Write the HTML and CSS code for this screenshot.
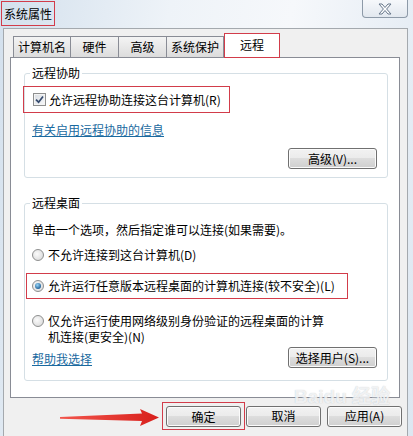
FILE: index.html
```html
<!DOCTYPE html>
<html lang="zh-CN">
<head>
  <meta charset="UTF-8">
  <title>系统属性</title>
  <link rel="stylesheet" href="styles.css">
</head>
<body>
<div class="titlebar">
  <span class="title">系统属性</span>
  <div class="close">
    <svg width="16" height="12" viewBox="0 0 16 12">
      <path d="M2 1 L5 1 L8 4.5 L11 1 L14 1 L9.6 6 L14 11 L11 11 L8 7.5 L5 11 L2 11 L6.4 6 Z" fill="#fff" stroke="#66768a" stroke-width="1" stroke-linejoin="round"/>
    </svg>
  </div>
</div>

<div class="frame">
  <div class="tabs">
    <div class="tab">计算机名</div>
    <div class="tab">硬件</div>
    <div class="tab">高级</div>
    <div class="tab">系统保护</div>
    <div class="tab active">远程</div>
  </div>

  <div class="panel">
    <fieldset class="group">
      <legend>远程协助</legend>
      <div class="check-row mark">
        <span class="checkbox">
          <svg width="9" height="9" viewBox="0 0 9 9"><path d="M1 4.6 L3.6 7.2 L8 1.4" fill="none" stroke="#364b6e" stroke-width="1.7"/></svg>
        </span>
        允许远程协助连接这台计算机(R)
      </div>
      <a class="link">有关启用远程协助的信息</a>
      <div class="row-end">
        <button class="btn btn-long">高级(V)...</button>
      </div>
    </fieldset>

    <fieldset class="group group-desktop">
      <legend>远程桌面</legend>
      <p class="hint">单击一个选项，然后指定谁可以连接(如果需要)。</p>
      <div class="radio-row"><span class="radio"></span>不允许连接到这台计算机(D)</div>
      <div class="radio-row mark"><span class="radio on"></span>允许运行任意版本远程桌面的计算机连接(较不安全)(L)</div>
      <div class="radio-row multi"><span class="radio"></span><span>仅允许运行使用网络级别身份验证的远程桌面的计算<br>机连接(更安全)(N)</span></div>
      <div class="row-between">
        <a class="link">帮助我选择</a>
        <button class="btn btn-long">选择用户(S)...</button>
      </div>
    </fieldset>
  </div>

  <div class="actions">
    <svg class="arrow" width="100" height="24" viewBox="0 0 100 24">
      <defs>
        <linearGradient id="arrowFill" x1="0" y1="0" x2="1" y2="0">
          <stop offset="0" stop-color="#f2554c"/>
          <stop offset="1" stop-color="#d8201c"/>
        </linearGradient>
      </defs>
      <path d="M0 13 L82 9.5 L80 5 L99 13.5 L80 22 L82 17 L0 14.8 Z" fill="url(#arrowFill)"/>
    </svg>
    <div class="ok-mark">
      <button class="btn">确定</button>
    </div>
    <button class="btn btn-cancel">取消</button>
    <button class="btn btn-apply">应用(A)</button>
    <div class="watermark">Baidu 经验</div>
  </div>
</div>
</body>
</html>
```

FILE: styles.css
```css
body {
  margin: 0;
  width: 413px;
  height: 436px;
  overflow: hidden;
  background: linear-gradient(100deg, #d3e0ed 0%, #eef3f8 35%, #f6f8fb 60%, #dde7f1 100%);
  color: #000;
  font-family: "Noto Sans CJK SC", "Noto Sans", sans-serif;
  font-size: 12px;
  line-height: 16px;
}
.titlebar {
  height: 28px;
  display: flex;
  justify-content: space-between;
  align-items: flex-start;
}
.title {
  margin: 1px 0 0 1px;
  height: 25px;
  line-height: 23px;
  padding: 0 2px;
  box-sizing: border-box;
  border: 1px solid #d23c4a;
}
.close {
  width: 46px;
  height: 18px;
  margin-right: 5px;
  box-sizing: border-box;
  border: 1px solid #8d9aa8;
  border-top: 0;
  border-radius: 0 0 4px 4px;
  background: linear-gradient(#f6f8fb, #e2e8ef);
  display: flex;
  align-items: center;
  justify-content: center;
}
.frame {
  margin: 0 5px 0 3px;
  height: 408px;
  box-sizing: border-box;
  border: 1px solid #a4a9ae;
  border-bottom: 0;
  background: #f0f0f0;
  padding: 4px 7px 0 6px;
}
.tabs {
  display: flex;
  align-items: flex-end;
  height: 24px;
  padding-left: 3px;
  position: relative;
  z-index: 1;
}
.tab {
  height: 21px;
  line-height: 20px;
  min-width: 49px;
  padding: 0 4px;
  box-sizing: border-box;
  text-align: center;
  border: 1px solid #898c95;
  border-bottom: 0;
  background: linear-gradient(#f4f4f4, #e8e8e8 50%, #dcdcdc);
  margin-right: -1px;
}
.tab.active {
  height: 25px;
  line-height: 22px;
  min-width: 56px;
  margin: 0 0 -1px 1px;
  background: #fff;
  border: 1px solid #d23c4a;
}
.panel {
  height: 341px;
  box-sizing: border-box;
  border: 1px solid #898c95;
  background: #fff;
  padding: 8px 11px 0 13px;
}
.group {
  margin: 0;
  border: 1px solid #d5dfe5;
  border-radius: 3px;
  padding: 0 10px 8px 7px;
}
.group legend {
  padding: 0 2px;
  margin-left: -2px;
  line-height: 14px;
}
.group-desktop {
  margin-top: 18px;
  padding-bottom: 12px;
}
.mark {
  border: 1px solid #d23c4a;
}
.check-row {
  display: flex;
  align-items: center;
  gap: 3px;
  width: fit-content;
  height: 27px;
  box-sizing: border-box;
  margin: 6px 0 0 -9px;
  padding: 0 8px 0 9px;
}
.checkbox {
  width: 13px;
  height: 13px;
  box-sizing: border-box;
  border: 1px solid #8e8f8f;
  background: linear-gradient(135deg, #d9dde2, #f7f8fa);
  box-shadow: inset 0 0 0 1px #f4f4f4;
  display: flex;
  align-items: center;
  justify-content: center;
}
.link {
  display: block;
  width: fit-content;
  margin-top: 9px;
  color: #1a6aa0;
  text-decoration: underline;
  cursor: pointer;
}
.row-end {
  display: flex;
  justify-content: flex-end;
  margin-top: 10px;
}
.hint {
  margin: 12px 0 0;
}
.radio-row {
  display: flex;
  align-items: center;
  gap: 4px;
  margin-top: 9px;
}
.radio-row.mark {
  width: fit-content;
  height: 26px;
  box-sizing: border-box;
  margin: 10px 0 0 -6px;
  padding: 0 12px 0 5px;
}
.radio-row.multi {
  align-items: flex-start;
  line-height: 16px;
  margin-top: 14px;
}
.radio-row.multi .radio {
  margin-top: 2px;
}
.radio {
  flex: none;
  width: 12px;
  height: 12px;
  box-sizing: border-box;
  border-radius: 50%;
  border: 1px solid #8e8f8f;
  background: radial-gradient(circle at 40% 40%, #fbfbfb, #d4d4d4);
  display: flex;
  align-items: center;
  justify-content: center;
}
.radio.on::after {
  content: "";
  width: 6px;
  height: 6px;
  border-radius: 50%;
  background: radial-gradient(circle at 40% 35%, #9ad6f8, #1d5e95 75%);
}
.row-between {
  display: flex;
  justify-content: space-between;
  align-items: center;
  margin-top: 2px;
}
.row-between .link {
  margin-top: 2px;
}
.btn {
  width: 75px;
  height: 21px;
  box-sizing: border-box;
  padding: 0;
  border: 1px solid #707070;
  border-radius: 3px;
  background: linear-gradient(#f2f2f2 0%, #ebebeb 49%, #dddddd 50%, #cfcfcf 100%);
  box-shadow: inset 0 0 0 1px #fbfbfb;
  font: inherit;
  line-height: 18px;
  color: #000;
}
.btn-long {
  width: 89px;
}
.actions {
  position: relative;
  display: flex;
  justify-content: flex-end;
  align-items: center;
  margin: 4px -2px 0 0;
}
.ok-mark {
  border: 1px solid #d23c4a;
  padding: 3px 3px 2px;
  display: flex;
}
.btn-cancel {
  margin-left: 1px;
}
.btn-apply {
  margin-left: 6px;
}
.arrow {
  position: absolute;
  left: 50px;
  top: 2px;
}
.watermark {
  position: absolute;
  left: 284px;
  top: -16px;
  font-family: "Liberation Sans", Arial, sans-serif;
  font-size: 19px;
  line-height: 22px;
  font-weight: bold;
  color: rgba(255, 255, 255, 0.75);
  text-shadow: 0 0 1px rgba(150, 160, 170, 0.6);
  pointer-events: none;
}
```
